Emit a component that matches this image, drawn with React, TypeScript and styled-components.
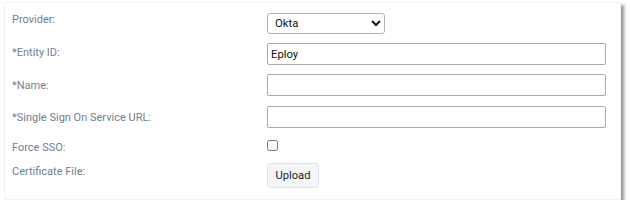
import React from "react";
import styled, { createGlobalStyle } from "styled-components";

const Global = createGlobalStyle`
  html, body { margin: 0; padding: 0; background: #ffffff; }
  body { font-family: Roboto, "Liberation Sans", Arial, sans-serif; }
`;

const Panel = styled.div`
  margin: 2px 0 0 4px;
  width: 617px;
  box-sizing: border-box;
  background: #ffffff;
  border: 1px solid #f2f2f2;
  box-shadow: 3px 3px 3px rgba(0, 0, 0, 0.42);
  padding: 9px 0 11px 7px;
  display: flex;
  flex-direction: column;
`;

const Row = styled.div<{ $mt: number }>`
  display: flex;
  align-items: flex-start;
  margin-top: ${(p) => p.$mt}px;
`;

const Label = styled.div<{ $pt: number }>`
  width: 255px;
  flex: none;
  padding-top: ${(p) => p.$pt}px;
  font-size: 11px;
  line-height: 16px;
  color: #737e8d;
`;

const Control = styled.div<{ $mt?: number }>`
  margin-top: ${(p) => p.$mt ?? 0}px;
  display: flex;
`;

const Select = styled.select`
  width: 118px;
  height: 21px;
  box-sizing: border-box;
  border: 1px solid #b4b4b4;
  border-radius: 3px;
  background: #ffffff;
  font-family: Roboto, "Liberation Sans", Arial, sans-serif;
  font-size: 11.3px;
  color: #111;
  padding: 0 3px;
  margin: 0;
`;

const TextInput = styled.input`
  width: 339px;
  height: 22px;
  box-sizing: border-box;
  border: 1px solid #ababab;
  border-radius: 2px;
  font-family: Roboto, "Liberation Sans", Arial, sans-serif;
  font-size: 11.3px;
  color: #111;
  padding: 0 3px;
  margin: 0;
  outline: none;
`;

const Check = styled.input`
  width: 11px;
  height: 11px;
  margin: 0;
`;

const UploadButton = styled.button`
  width: 52px;
  height: 25px;
  box-sizing: border-box;
  background: #f3f6f9;
  border: 1px solid #dde3ea;
  border-radius: 3px;
  font-family: Roboto, "Liberation Sans", Arial, sans-serif;
  font-size: 11.2px;
  color: #1d1d1d;
  padding: 0;
  margin: 0;
`;

export default function App() {
  return (
    <>
      <Global />
      <Panel>
        <Row $mt={0}>
          <Label $pt={0}>Provider:</Label>
          <Control $mt={1}>
            <Select defaultValue="okta">
              <option value="okta">Okta</option>
            </Select>
          </Control>
        </Row>
        <Row $mt={9}>
          <Label $pt={2}>*Entity ID:</Label>
          <Control>
            <TextInput defaultValue="Eploy" />
          </Control>
        </Row>
        <Row $mt={9}>
          <Label $pt={4}>*Name:</Label>
          <Control>
            <TextInput />
          </Control>
        </Row>
        <Row $mt={10}>
          <Label $pt={4}>*Single Sign On Service URL:</Label>
          <Control>
            <TextInput />
          </Control>
        </Row>
        <Row $mt={12}>
          <Label $pt={0}>Force SSO:</Label>
          <Control>
            <Check type="checkbox" />
          </Control>
        </Row>
        <Row $mt={7}>
          <Label $pt={1}>Certificate File:</Label>
          <Control>
            <UploadButton type="button">Upload</UploadButton>
          </Control>
        </Row>
      </Panel>
    </>
  );
}
